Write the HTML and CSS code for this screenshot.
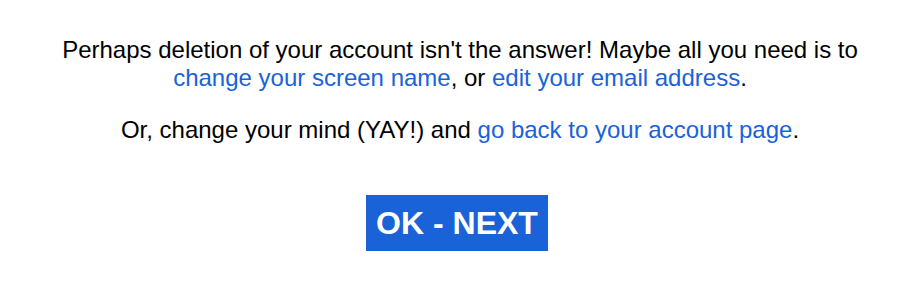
FILE: index.html
```html
<!DOCTYPE html>
<html lang="en">
<head>
  <meta charset="UTF-8" />
  <title>Delete account</title>
  <link rel="stylesheet" href="styles.css">
</head>
<body>
  <div class="content">
    <p>Perhaps deletion of your account isn't the answer! Maybe all you need is to <a href="#">change your screen name</a>, or <a href="#">edit your email address</a>.</p>
    <p>Or, change your mind (YAY!) and <a href="#">go back to your account page</a>.</p>
    <div class="actions">
      <button class="next">OK - NEXT</button>
    </div>
  </div>
</body>
</html>
```

FILE: styles.css
```css
body {
  margin: 0;
  background: #fff;
  font-family: "Liberation Sans", Arial, sans-serif;
  color: #000;
}

.content {
  width: 840px;
  margin: 0 auto;
  padding-top: 36px;
  text-align: center;
}

p {
  margin: 0 0 24px;
  font-size: 24px;
  line-height: 28px;
}

a {
  color: #1a62d8;
  text-decoration: none;
}

.actions {
  padding-top: 27px;
}

.next {
  margin-right: 6px;
  padding: 10px 10px;
  font-family: inherit;
  font-size: 32px;
  font-weight: bold;
  line-height: 36px;
  background-color: #1a62d8;
  color: #fff;
  border: none;
  border-radius: 0;
  cursor: pointer;
}
```
